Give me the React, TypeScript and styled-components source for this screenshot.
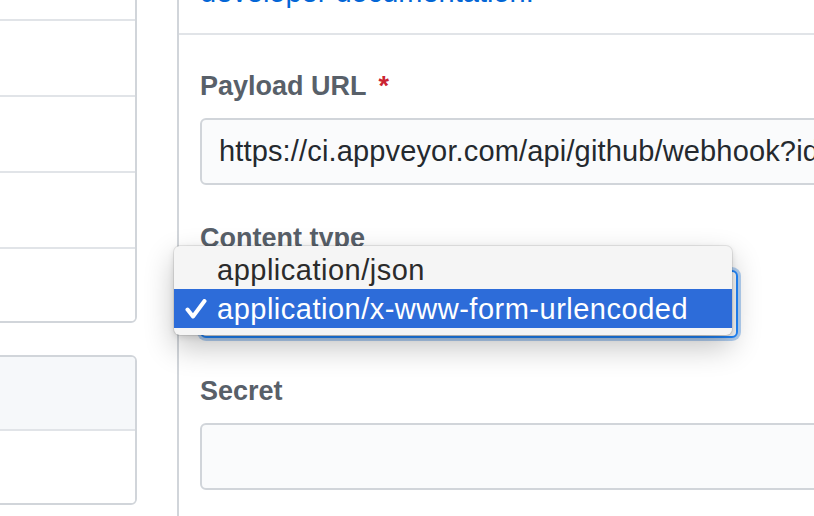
import React from 'react';
import styled, { createGlobalStyle } from 'styled-components';

const GlobalStyle = createGlobalStyle`
  html, body {
    margin: 0;
    padding: 0;
    background: #fff;
    overflow: hidden;
  }

  body {
    font-family: "Liberation Sans", Arial, sans-serif;
    color: #24292e;
  }
`;

const Page = styled.div`
  display: flex;
  align-items: flex-start;
  height: 516px;
  overflow: hidden;
`;

const Sidebar = styled.aside`
  flex-shrink: 0;
  width: 157px;
  margin-left: -20px;
  margin-top: -57px;
  display: flex;
  flex-direction: column;
  gap: 32px;
`;

const Box = styled.div`
  border: 2px solid #d1d5da;
  border-radius: 6px;
  background: #fff;
  overflow: hidden;
`;

const BoxRow = styled.div<{ $h: number; $first?: boolean; $shade?: boolean }>`
  box-sizing: border-box;
  height: ${({ $h }) => $h}px;
  border-top: ${({ $first }) => ($first ? 'none' : '2px solid #e1e4e8')};
  background: ${({ $shade }) => ($shade ? '#f6f8fa' : '#fff')};
`;

const Main = styled.main`
  flex: 1;
  min-width: 0;
  margin-left: 40px;
  height: 540px;
  border-left: 2px solid #d1d5da;
`;

const Header = styled.div`
  display: flow-root;
  height: 33px;
  padding-left: 21px;
  border-bottom: 2px solid #e1e4e8;
`;

const Description = styled.p`
  margin: -25px 0 0;
  font-size: 29px;
  line-height: 34px;
  white-space: nowrap;

  a {
    color: #0366d6;
    text-decoration: none;
  }
`;

const Form = styled.form`
  width: 760px;
  padding: 34px 0 0 21px;
  display: flex;
  flex-direction: column;
  gap: 36px;
`;

const FormGroup = styled.div`
  position: relative;
`;

const Label = styled.label`
  display: block;
  margin-bottom: 15px;
  font-size: 27px;
  line-height: 34px;
  font-weight: 700;
  color: #586069;
  white-space: nowrap;
`;

const Required = styled.span`
  margin-left: 5px;
  color: #cb2431;
`;

const TextInput = styled.input`
  display: block;
  box-sizing: border-box;
  width: 100%;
  height: 67px;
  padding: 0 17px;
  border: 2px solid #d1d5da;
  border-radius: 6px;
  background: #fafbfc;
  font-family: "Liberation Sans", Arial, sans-serif;
  font-size: 29px;
  letter-spacing: 0.15px;
  color: #24292e;
  outline: none;
`;

const SelectBox = styled.div`
  box-sizing: border-box;
  width: 538px;
  height: 68px;
  padding: 0 17px;
  display: flex;
  align-items: center;
  border: 2px solid #2188ff;
  border-radius: 6px;
  background: #fafbfc;
  box-shadow: 0 0 0 3px rgba(3, 102, 214, 0.3);
  font-size: 29px;
  color: #24292e;
`;

const Menu = styled.ul`
  position: absolute;
  left: -26px;
  top: 25px;
  z-index: 10;
  box-sizing: border-box;
  width: 558px;
  margin: 0;
  padding: 4px 0 7px;
  list-style: none;
  background: #f5f5f5;
  border-radius: 6px;
  box-shadow: 0 0 0 1px rgba(0, 0, 0, 0.08), 0 12px 30px rgba(0, 0, 0, 0.24), 0 2px 6px rgba(0, 0, 0, 0.12);
`;

const MenuItem = styled.li<{ $selected?: boolean }>`
  position: relative;
  height: 39px;
  padding-left: 43px;
  display: flex;
  align-items: center;
  font-size: 29px;
  line-height: 34px;
  letter-spacing: 0.5px;
  white-space: nowrap;
  color: ${({ $selected }) => ($selected ? '#fff' : '#2b2b2b')};
  background: ${({ $selected }) => ($selected ? '#2d6cd9' : 'transparent')};
`;

const Check = styled.svg`
  position: absolute;
  left: 11px;
  top: 10px;
  width: 22px;
  height: 20px;
`;

const options = ['application/json', 'application/x-www-form-urlencoded'];
const selected = 'application/x-www-form-urlencoded';

const App = () => (
  <>
    <GlobalStyle />
    <Page>
      <Sidebar>
        <Box>
          <BoxRow $h={74} $first />
          <BoxRow $h={76} />
          <BoxRow $h={76} />
          <BoxRow $h={76} />
          <BoxRow $h={74} />
        </Box>
        <Box>
          <BoxRow $h={72} $first $shade />
          <BoxRow $h={74} />
        </Box>
      </Sidebar>

      <Main>
        <Header>
          <Description>
            <a href="#docs">developer documentation.</a>
          </Description>
        </Header>

        <Form>
          <FormGroup>
            <Label>
              Payload URL <Required>*</Required>
            </Label>
            <TextInput type="text" readOnly value="https://ci.appveyor.com/api/github/webhook?id=" />
          </FormGroup>

          <FormGroup>
            <Label>Content type</Label>
            <SelectBox>{selected}</SelectBox>
            <Menu>
              {options.map((option) => (
                <MenuItem key={option} $selected={option === selected}>
                  {option === selected && (
                    <Check viewBox="0 0 22 20">
                      <path
                        d="M2.5 10.5 L8 17.5 L19.5 2"
                        fill="none"
                        stroke="#fff"
                        strokeWidth="4"
                        strokeLinecap="round"
                        strokeLinejoin="round"
                      />
                    </Check>
                  )}
                  {option}
                </MenuItem>
              ))}
            </Menu>
          </FormGroup>

          <FormGroup>
            <Label>Secret</Label>
            <TextInput type="password" readOnly value="" />
          </FormGroup>
        </Form>
      </Main>
    </Page>
  </>
);

export default App;
